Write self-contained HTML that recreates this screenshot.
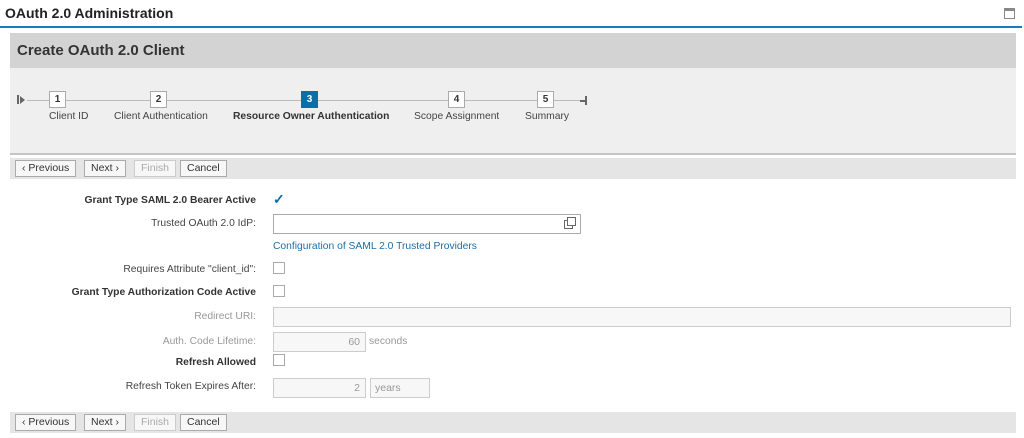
<!DOCTYPE html>
<html><head><style>
*{box-sizing:border-box}
body{margin:0;width:1024px;height:438px;background:#fff;font-family:"Liberation Sans",sans-serif;position:relative;overflow:hidden;font-size:10.3px;color:#333}
.a{position:absolute}
.btn{position:absolute;top:2px;height:17px;border:1px solid #aaa;background:#f7f7f7;font-size:10.5px;line-height:15px;padding:0 6px;color:#333}
.box{position:absolute;top:91px;width:17px;height:17px;border:1px solid #aaa;background:#fff;font-size:10px;font-weight:bold;text-align:center;line-height:15px;color:#333}
.lbl{position:absolute;top:111px;font-size:10.3px;color:#444;white-space:nowrap}
.fl{position:absolute;right:768px;font-size:10.3px;color:#444;white-space:nowrap;text-align:right}
.b{font-weight:bold;color:#333}
.dis{color:#999}
.cb{position:absolute;left:273px;width:12px;height:12px;border:1px solid #aaa;background:#fff}
.inp{position:absolute;height:20px;border:1px solid #ccc;background:#f7f7f7;font-size:10.5px;color:#999;text-align:right;padding:3px 5px 0 0}
</style></head><body>
<div class="a" style="left:5px;top:5px;font-size:14px;font-weight:bold;color:#222">OAuth 2.0 Administration</div>
<div class="a" style="left:1004px;top:8px;width:11px;height:11px;border:1px solid #888;border-top:3px solid #888"></div>
<div class="a" style="left:0;top:26px;width:1022px;height:2px;background:#1d7bbd"></div>
<div class="a" style="left:10px;top:33px;width:1006px;height:35px;background:#d3d3d3"></div>
<div class="a" style="left:17px;top:42px;font-size:15px;font-weight:bold;color:#333">Create OAuth 2.0 Client</div>
<div class="a" style="left:10px;top:68px;width:1006px;height:85px;background:#efefef"></div>
<div class="a" style="left:10px;top:153px;width:1006px;height:2px;background:#c4c4c4"></div>
<div class="a" style="left:27px;top:100px;width:560px;height:1px;background:#bbb"></div>
<div class="a" style="left:17px;top:95px;width:2px;height:9px;background:#666"></div>
<div class="a" style="left:20px;top:96px;width:0;height:0;border-left:5px solid #666;border-top:4px solid transparent;border-bottom:4px solid transparent"></div>
<div class="a" style="left:585px;top:96px;width:2px;height:9px;background:#666"></div>
<div class="a" style="left:580px;top:100px;width:6px;height:2px;background:#666"></div>
<div class="box" style="left:49px">1</div>
<div class="box" style="left:150px">2</div>
<div class="box" style="left:301px;background:#0a6ea8;border-color:#0a6ea8;color:#fff">3</div>
<div class="box" style="left:448px">4</div>
<div class="box" style="left:537px">5</div>
<div class="lbl" style="left:49px">Client ID</div>
<div class="lbl" style="left:114px">Client Authentication</div>
<div class="lbl" style="left:233px;font-weight:bold;color:#333">Resource Owner Authentication</div>
<div class="lbl" style="left:414px">Scope Assignment</div>
<div class="lbl" style="left:525px">Summary</div>
<div class="a" style="left:10px;top:158px;width:1006px;height:21px;background:#e5e5e5">
<div class="btn" style="left:5px">‹ Previous</div><div class="btn" style="left:74px">Next ›</div><div class="btn" style="left:124px;color:#aaa;border-color:#ccc">Finish</div><div class="btn" style="left:170px">Cancel</div></div>
<div class="fl b" style="top:195px">Grant Type SAML 2.0 Bearer Active</div>
<div class="cb" style="top:193px;border:none;color:#0a6ea8;font-size:14px;line-height:12px;font-weight:bold">✓</div>
<div class="fl" style="top:218px">Trusted OAuth 2.0 IdP:</div>
<div class="a" style="left:273px;top:214px;width:308px;height:20px;border:1px solid #aaa;background:#fff"></div>
<div class="a" style="left:564px;top:220px;width:9px;height:9px;border:1px solid #666"></div>
<div class="a" style="left:567px;top:217px;width:9px;height:9px;border:1px solid #666;background:#fff"></div>
<div class="a" style="left:273px;top:241px;color:#1a6fa8">Configuration of SAML 2.0 Trusted Providers</div>
<div class="fl" style="top:264px">Requires Attribute "client_id":</div><div class="cb" style="top:262px"></div>
<div class="fl b" style="top:287px">Grant Type Authorization Code Active</div><div class="cb" style="top:285px"></div>
<div class="fl dis" style="top:311px">Redirect URI:</div><div class="inp" style="left:273px;top:307px;width:738px"></div>
<div class="fl dis" style="top:336px">Auth. Code Lifetime:</div><div class="inp" style="left:273px;top:332px;width:93px">60</div>
<div class="a dis" style="left:369px;top:336px">seconds</div>
<div class="fl b" style="top:357px">Refresh Allowed</div><div class="cb" style="top:354px"></div>
<div class="fl" style="top:381px">Refresh Token Expires After:</div><div class="inp" style="left:273px;top:378px;width:93px">2</div>
<div class="inp" style="left:370px;top:378px;width:60px;text-align:left;padding-left:4px">years</div>
<div class="a" style="left:10px;top:412px;width:1006px;height:21px;background:#e5e5e5">
<div class="btn" style="left:5px">‹ Previous</div><div class="btn" style="left:74px">Next ›</div><div class="btn" style="left:124px;color:#aaa;border-color:#ccc">Finish</div><div class="btn" style="left:170px">Cancel</div></div>
</body></html>
